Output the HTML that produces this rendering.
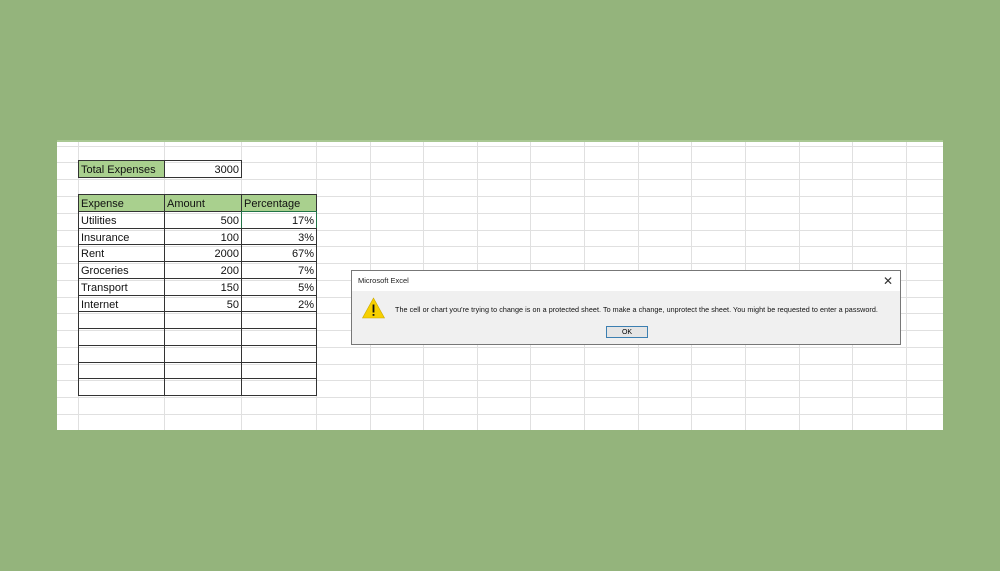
<!DOCTYPE html>
<html><head><style>
body{margin:0;width:1000px;height:571px;background:#94b47c;position:relative;overflow:hidden;font-family:"Liberation Sans",sans-serif}
#sheet{position:absolute;left:57px;top:140px;width:886px;height:290px;background:#fff;border-top:2px solid #a9c893;box-sizing:border-box;overflow:hidden}
.v{position:absolute;top:0;bottom:0;width:1px;background:#e0e0e0}
.h{position:absolute;left:0;right:0;height:1px;background:#e0e0e0}
.c{position:absolute;box-sizing:border-box;border:1px solid #333;font-size:11px;line-height:18px;padding:0 2px;color:#111;white-space:nowrap;overflow:hidden}
.g{background:#a9d08e}
.r{text-align:right}
#dlg{position:absolute;left:351px;top:270px;width:550px;height:75px;border:1px solid #777;background:#f0f0f0;box-sizing:border-box}
#tb{height:20px;background:#fff;font-size:7.5px;line-height:20px;padding-left:6px;color:#222}
#x{position:absolute;right:7px;top:3px;font-size:12px;color:#333}
#msg{position:absolute;left:43px;top:34px;font-size:7.2px;color:#111;letter-spacing:0.05px}
#ok{position:absolute;left:254px;top:55px;width:42px;height:12px;border:1px solid #3c7fb1;background:#e5e5e5;font-size:7px;line-height:11px;text-align:center;box-sizing:border-box}
</style></head><body>
<div id="sheet">
<div class="v" style="left:21px"></div><div class="v" style="left:107px"></div><div class="v" style="left:184px"></div><div class="v" style="left:259px"></div><div class="v" style="left:313px"></div><div class="v" style="left:366px"></div><div class="v" style="left:420px"></div><div class="v" style="left:473px"></div><div class="v" style="left:527px"></div><div class="v" style="left:581px"></div><div class="v" style="left:634px"></div><div class="v" style="left:688px"></div><div class="v" style="left:742px"></div><div class="v" style="left:795px"></div><div class="v" style="left:849px"></div>
<div class="h" style="top:4px"></div><div class="h" style="top:20px"></div><div class="h" style="top:37px"></div><div class="h" style="top:54px"></div><div class="h" style="top:71px"></div><div class="h" style="top:88px"></div><div class="h" style="top:104px"></div><div class="h" style="top:121px"></div><div class="h" style="top:138px"></div><div class="h" style="top:155px"></div><div class="h" style="top:171px"></div><div class="h" style="top:188px"></div><div class="h" style="top:205px"></div><div class="h" style="top:222px"></div><div class="h" style="top:238px"></div><div class="h" style="top:255px"></div><div class="h" style="top:272px"></div><div class="h" style="top:288px"></div>
</div>
<div class="c g" style="left:78px;top:160px;width:87px;height:18px">Total Expenses</div>
<div class="c r" style="left:164px;top:160px;width:78px;height:18px">3000</div>
<div class="c g" style="left:78px;top:194px;width:87px;height:18px">Expense</div>
<div class="c g" style="left:164px;top:194px;width:78px;height:18px">Amount</div>
<div class="c g" style="left:241px;top:194px;width:76px;height:18px">Percentage</div>
<div class="c" style="left:78px;top:211px;width:87px;height:18px">Utilities</div><div class="c r" style="left:164px;top:211px;width:78px;height:18px">500</div><div class="c r" style="left:241px;top:211px;width:76px;height:18px;border:1px solid #217346">17%</div>
<div class="c" style="left:78px;top:228px;width:87px;height:17px">Insurance</div><div class="c r" style="left:164px;top:228px;width:78px;height:17px">100</div><div class="c r" style="left:241px;top:228px;width:76px;height:17px">3%</div>
<div class="c" style="left:78px;top:244px;width:87px;height:18px">Rent</div><div class="c r" style="left:164px;top:244px;width:78px;height:18px">2000</div><div class="c r" style="left:241px;top:244px;width:76px;height:18px">67%</div>
<div class="c" style="left:78px;top:261px;width:87px;height:18px">Groceries</div><div class="c r" style="left:164px;top:261px;width:78px;height:18px">200</div><div class="c r" style="left:241px;top:261px;width:76px;height:18px">7%</div>
<div class="c" style="left:78px;top:278px;width:87px;height:18px">Transport</div><div class="c r" style="left:164px;top:278px;width:78px;height:18px">150</div><div class="c r" style="left:241px;top:278px;width:76px;height:18px">5%</div>
<div class="c" style="left:78px;top:295px;width:87px;height:17px">Internet</div><div class="c r" style="left:164px;top:295px;width:78px;height:17px">50</div><div class="c r" style="left:241px;top:295px;width:76px;height:17px">2%</div>
<div class="c" style="left:78px;top:311px;width:87px;height:18px"></div><div class="c" style="left:164px;top:311px;width:78px;height:18px"></div><div class="c" style="left:241px;top:311px;width:76px;height:18px"></div>
<div class="c" style="left:78px;top:328px;width:87px;height:18px"></div><div class="c" style="left:164px;top:328px;width:78px;height:18px"></div><div class="c" style="left:241px;top:328px;width:76px;height:18px"></div>
<div class="c" style="left:78px;top:345px;width:87px;height:18px"></div><div class="c" style="left:164px;top:345px;width:78px;height:18px"></div><div class="c" style="left:241px;top:345px;width:76px;height:18px"></div>
<div class="c" style="left:78px;top:362px;width:87px;height:17px"></div><div class="c" style="left:164px;top:362px;width:78px;height:17px"></div><div class="c" style="left:241px;top:362px;width:76px;height:17px"></div>
<div class="c" style="left:78px;top:378px;width:87px;height:18px"></div><div class="c" style="left:164px;top:378px;width:78px;height:18px"></div><div class="c" style="left:241px;top:378px;width:76px;height:18px"></div>
<div id="dlg">
<div id="tb">Microsoft Excel</div><div id="x">✕</div>
<svg style="position:absolute;left:10px;top:26px" width="23" height="22" viewBox="0 0 23 22"><path d="M11.5 1 L22.5 21 L0.5 21 Z" fill="#f7d000" stroke="#c9a800" stroke-width="0.6"/><rect x="10.6" y="7.5" width="1.8" height="8" fill="#111"/><rect x="10.6" y="17" width="1.8" height="1.8" fill="#111"/></svg>
<div id="msg">The cell or chart you're trying to change is on a protected sheet. To make a change, unprotect the sheet. You might be requested to enter a password.</div>
<div id="ok">OK</div>
</div>
</body></html>
